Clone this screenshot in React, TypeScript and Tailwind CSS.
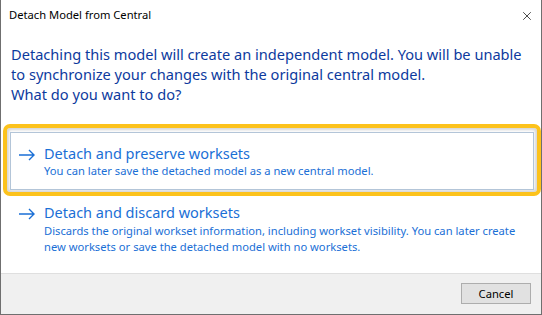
import React from "react";
import { X } from "lucide-react";

function Arrow() {
  return (
    <svg width="18" height="12" viewBox="0 0 18 12" className="shrink-0">
      <path
        d="M1 6 H16 M11 1 L16 6 L11 11"
        fill="none"
        stroke="#1a6fd6"
        strokeWidth="1.4"
      />
    </svg>
  );
}

function CommandLink({
  title,
  desc,
  hover,
}: {
  title: string;
  desc: string;
  hover?: boolean;
}) {
  return (
    <div
      className={`flex gap-[8px] pr-[10px] ${
        hover
          ? "border border-[#b3c5d8] bg-white pl-[7px] pt-[10px] pb-[11px]"
          : "pt-[6px]"
      }`}
    >
      <div className="pt-[6px]">
        <Arrow />
      </div>
      <div>
        <div className="text-[14.5px] leading-[20px] text-[#1a6fd6]">{title}</div>
        <div
          className={`text-[11.2px] text-[#1a6fd6] ${
            hover ? "leading-[15px]" : "mt-[1px] leading-[15.5px]"
          }`}
        >
          {desc}
        </div>
      </div>
    </div>
  );
}

export default function App() {
  return (
    <div
      className="flex h-[315px] w-[542px] flex-col border border-t-0 border-[#6f6f6f] bg-white"
      style={{ fontFamily: '"Noto Sans", sans-serif' }}
    >
      {/* Title bar */}
      <div className="flex h-[31px] items-center justify-between pl-[8px] pr-[7px]">
        <span className="text-[11.2px] text-black">Detach Model from Central</span>
        <X size={14} strokeWidth={1.2} className="text-black" />
      </div>

      {/* Main instruction */}
      <div className="px-[10px] pt-[13px] text-[14.6px] leading-[20px] text-[#0d3a9e]">
        <p>
          Detaching this model will create an independent model. You will be unable
          <br />
          to synchronize your changes with the original central model.
        </p>
        <p>What do you want to do?</p>
      </div>

      {/* Commands */}
      <div className="mt-[20px] ml-[2px] rounded-[7px] border-4 border-[#fcc21c] px-[3px] pt-[4px] pb-[2px] shadow-[inset_0_0_3px_2px_#d4d4d4]">
        <CommandLink
          hover
          title="Detach and preserve worksets"
          desc="You can later save the detached model as a new central model."
        />
      </div>
      <div className="pl-[17px]">
        <CommandLink
          title="Detach and discard worksets"
          desc="Discards the original workset information, including workset visibility. You can later create new worksets or save the detached model with no worksets."
        />
      </div>

      {/* Footer */}
      <div className="mt-auto flex h-[41px] items-start justify-end border-t border-[#dfdfdf] bg-[#f0f0f0] pr-[10px] pt-[9px]">
        <button className="h-[21px] w-[70px] border border-[#adadad] bg-[#e1e1e1] text-[11.2px] leading-[19px] text-black">
          Cancel
        </button>
      </div>
    </div>
  );
}
